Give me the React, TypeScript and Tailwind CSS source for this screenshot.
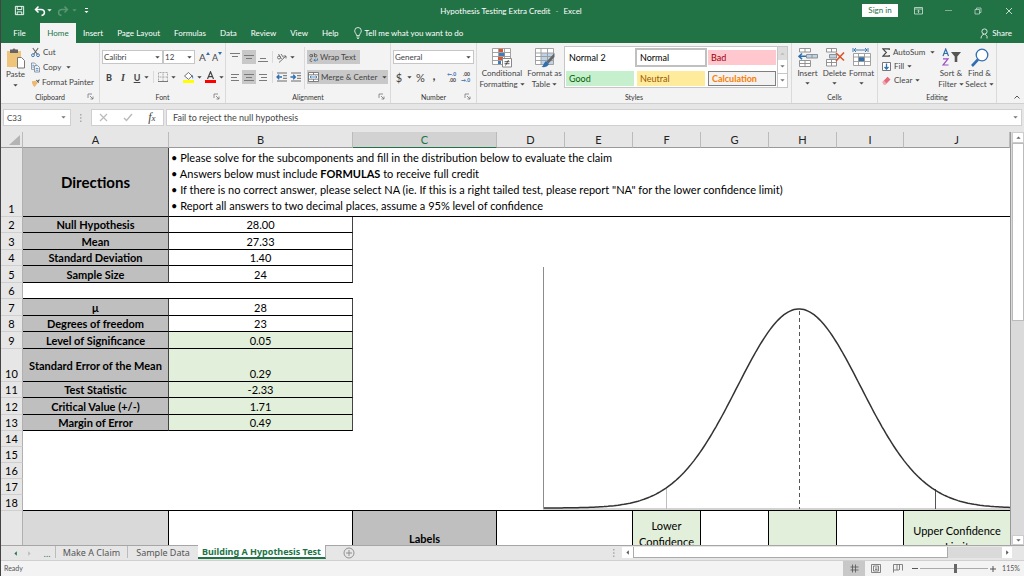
import type { ReactNode } from "react";
import clsx from "clsx";

const menuTabs = ["Insert", "Page Layout", "Formulas", "Data", "Review", "View", "Help"];

const rows = [
  { n: 2, label: "Null Hypothesis", value: "28.00", h: "h-[16px]" },
  { n: 3, label: "Mean", value: "27.33", h: "h-[17px]" },
  { n: 4, label: "Standard Deviation", value: "1.40", h: "h-[16px]" },
  { n: 5, label: "Sample Size", value: "24", h: "h-[17px]" },
  { n: 6, h: "h-[16px]" },
  { n: 7, label: "µ", value: "28", h: "h-[17px]" },
  { n: 8, label: "Degrees of freedom", value: "23", h: "h-[16px]" },
  { n: 9, label: "Level of Significance", value: "0.05", h: "h-[17px]", green: true },
  { n: 10, label: "Standard Error of the Mean", value: "0.29", h: "h-[33px]", green: true },
  { n: 11, label: "Test Statistic", value: "-2.33", h: "h-[16px]", green: true },
  { n: 12, label: "Critical Value (+/-)", value: "1.71", h: "h-[17px]", green: true },
  { n: 13, label: "Margin of Error", value: "0.49", h: "h-[16px]", green: true },
  { n: 14, h: "h-[16px]" },
  { n: 15, h: "h-[16px]" },
  { n: 16, h: "h-[16px]" },
  { n: 17, h: "h-[16px]" },
  { n: 18, h: "h-[16px]" },
];

function Caret({ className }: { className?: string }) {
  return (
    <svg viewBox="0 0 5 3" className={clsx("h-[3px] w-[5px] shrink-0", className)} aria-hidden>
      <path d="M0.3 0.2h4.4L2.5 2.6z" fill="currentColor" />
    </svg>
  );
}

function Group({ label, launcher, className, children }: { label: string; launcher?: boolean; className: string; children: ReactNode }) {
  return (
    <section aria-label={label} className={clsx("flex shrink-0 flex-col border-r border-[#dadada]", className)}>
      <div className="h-12">{children}</div>
      <div className="flex h-[11px] items-center px-1 text-[7px] leading-[10px] text-[#333]">
        <span className="w-2" />
        <span className="flex-1 text-center">{label}</span>
        <span className="w-2">
          {launcher && (
            <svg viewBox="0 0 7 7" className="h-[7px] w-[7px]" fill="none" stroke="#777" strokeWidth="0.8">
              <path d="M1 5V1h4M3 3l3 3M6 3.5V6H3.5" />
            </svg>
          )}
        </span>
      </div>
    </section>
  );
}

function Combo({ label, value, className }: { label: string; value: string; className: string }) {
  return (
    <label className={clsx("flex h-[14px] shrink-0 items-center border border-[#c6c6c6] bg-white pr-[2px] text-[#444]", className)}>
      <select aria-label={label} className="h-full min-w-0 flex-1 appearance-none pl-px outline-none">
        <option>{value}</option>
      </select>
      <Caret />
    </label>
  );
}

function Lines({ kind }: { kind: "top" | "middle" | "bottom" | "left" | "center" | "right" }) {
  const paths = {
    top: "M1 2.5h10M3 5.5h6",
    middle: "M1 4.5h10M3 7.5h6",
    bottom: "M3 7.5h6M1 10.5h10",
    left: "M2 3.5h8M2 6.5h6M2 9.5h8",
    center: "M1 3.5h10M3 6.5h6M1 9.5h10",
    right: "M2 3.5h8M4 6.5h6M2 9.5h8",
  };
  return (
    <button
      aria-label={`Align ${kind}`}
      className={clsx("flex h-[14px] w-[14px] items-center justify-center", (kind === "middle" || kind === "center") && "bg-[#c8c8c8]")}
    >
      <svg viewBox="0 0 12 12" className="h-3 w-3" stroke="#7a7a7a" strokeWidth="1">
        <path d={paths[kind]} />
      </svg>
    </button>
  );
}

function Indent({ out }: { out?: boolean }) {
  return (
    <button aria-label={out ? "Decrease indent" : "Increase indent"} className="flex w-[14px] justify-center">
      <svg viewBox="0 0 12 12" className="h-3 w-3" fill="none">
        <path d="M1 2h10M7 4.7h4M7 7.3h4M1 10h10" stroke="#6a6a6a" />
        <path d={out ? "M6 6H1M3.2 3.8L1 6l2.2 2.2" : "M0.5 6H5M3.2 3.8L5.4 6 3.2 8.2"} stroke="#2f6fae" strokeWidth="1.3" />
      </svg>
    </button>
  );
}

function TitleBar() {
  return (
    <header className="flex h-[23px] shrink-0 items-center bg-[#217346] pb-[2px] text-white">
      <div className="flex flex-1 items-center pl-[13px]">
        <button aria-label="Save" className="mr-[9px]">
          <svg viewBox="0 0 12 12" className="h-[11px] w-[11px]" fill="none" stroke="white">
            <path d="M1.5 1.5h9v9h-9z" />
            <path d="M3.5 1.5V5h5V1.5M3.5 10.5v-3h5v3" />
          </svg>
        </button>
        <button aria-label="Undo" className="flex items-center gap-px">
          <svg viewBox="0 0 12 12" className="h-3 w-3" fill="none" stroke="white" strokeWidth="1.5">
            <path d="M4.5 1.5L1.5 4.5l3 3M1.5 4.5H7c4.5 0 4.5 5.5 0.5 6" />
          </svg>
          <Caret />
        </button>
        <button aria-label="Redo" className="ml-[5px] flex items-center gap-[3px] opacity-25">
          <svg viewBox="0 0 12 12" className="h-3 w-3" fill="none" stroke="white" strokeWidth="1.5">
            <path d="M7.5 1.5l3 3-3 3M10.5 4.5H5C0.5 4.5 0.5 10 4.5 10.5" />
          </svg>
          <Caret />
        </button>
        <button aria-label="Customize toolbar" className="ml-[7px]">
          <svg viewBox="0 0 5 6" className="h-[6px] w-[5px]" fill="white">
            <path d="M1 0h3v1H1zM0.5 3h4L2.5 5z" />
          </svg>
        </button>
      </div>
      <h1 className="flex gap-[5px] pr-4 text-[8px] whitespace-pre">
        <span>Hypothesis Testing Extra Credit</span>
        <span className="opacity-60">-</span>
        <span>Excel</span>
      </h1>
      <div className="flex flex-1 items-center justify-end">
        <button className="mr-[5px] h-[13px] w-9 bg-white text-[8px] leading-[13px] text-[#217346]">Sign in</button>
        <button aria-label="Ribbon display options" className="flex w-[30px] justify-center">
          <svg viewBox="0 0 9 8" className="h-2 w-[9px]" fill="none" stroke="#cfe3d7" strokeWidth="0.8">
            <path d="M0.5 0.5h8v6.5h-8zM0.5 2h8M4.5 6V3.3M3.2 4.5l1.3-1.3 1.3 1.3" />
          </svg>
        </button>
        <button aria-label="Minimize" className="flex w-[30px] justify-center">
          <span className="h-px w-[7px] bg-[#7fae94]" />
        </button>
        <button aria-label="Restore" className="flex w-[30px] justify-center">
          <svg viewBox="0 0 8 8" className="h-2 w-2" fill="none" stroke="#bcd6c7" strokeWidth="0.8">
            <path d="M1 2.5h4.5v4.5H1zM2.5 2.5V1h4.5v4.5H5.5" />
          </svg>
        </button>
        <button aria-label="Close" className="flex w-[31px] justify-center">
          <svg viewBox="0 0 8 8" className="h-2 w-2" stroke="#d5e6dc" strokeWidth="0.9">
            <path d="M1 1l6 6M7 1L1 7" />
          </svg>
        </button>
      </div>
    </header>
  );
}

function MenuBar() {
  return (
    <nav className="flex h-5 shrink-0 items-stretch bg-[#217346] text-[8px] text-white">
      <button className="w-[39px] pr-[2px]">File</button>
      <button className="w-9 bg-[#f3f3f3] text-[#217346]">Home</button>
      {menuTabs.map((tab) => (
        <button key={tab} className="px-[7px]">
          {tab}
        </button>
      ))}
      <button className="ml-2 flex items-center gap-[3px]">
        <svg viewBox="0 0 8 12" className="h-3 w-2" fill="none" stroke="white" strokeWidth="0.8">
          <path d="M2.5 8.5C2.5 6.5 0.7 6 0.7 3.8a3.3 3.3 0 016.6 0C7.3 6 5.5 6.5 5.5 8.500zM2.5 10h3M3 11.4h2" />
        </svg>
        Tell me what you want to do
      </button>
      <button className="ml-auto flex items-center gap-[3px] pr-3">
        <svg viewBox="0 0 9 11" className="h-[11px] w-[9px]" fill="none" stroke="white" strokeWidth="0.8">
          <circle cx="4.5" cy="3.5" r="2.6" />
          <path d="M1 10.5C1 8 2.5 6.5 4 6.2M5 6.2l2 2v2.3" />
        </svg>
        Share
      </button>
    </nav>
  );
}

function Ribbon() {
  return (
    <div className="flex h-[60px] shrink-0 bg-[#f3f3f3] text-[8px] leading-[11px] text-[#444]">
      <Group label="Clipboard" launcher className="w-[99px]">
        <div className="flex pt-[4px]">
          <button className="flex w-[29px] flex-col items-center">
            <svg viewBox="0 0 20 22" className="h-[22px] w-5">
              <path d="M1 4h14v16H1z" fill="#efc57b" />
              <path d="M4 2.5h2.5a1.7 1.7 0 013 0H12V6H4z" fill="#666" />
              <path d="M11.5 10.5h4l3 3V21h-7z" fill="white" stroke="#777" />
            </svg>
            <span>Paste</span>
            <Caret className="mt-[4px]" />
          </button>
          <div className="flex flex-col gap-[4px] pl-px">
            <button className="flex items-center gap-[3px]">
              <svg viewBox="0 0 10 11" className="h-[11px] w-[9px]" fill="none">
                <path d="M2 0.5l5 7M8 0.5l-5 7" stroke="#666" strokeWidth="1.2" />
                <circle cx="2.2" cy="8.5" r="1.6" stroke="#2f6fae" />
                <circle cx="7.8" cy="8.5" r="1.6" stroke="#2f6fae" />
              </svg>
              Cut
            </button>
            <button className="flex items-center gap-[3px]">
              <svg viewBox="0 0 10 11" className="h-[11px] w-[9px]" fill="white" stroke="#6d7f92" strokeWidth="0.9">
                <path d="M0.5 0.5h3.5l1.5 1.5v5.5h-5z" />
                <path d="M4 3.5h3.5l2 2v5H4z" />
                <path d="M1.5 3h2M1.5 5h2M5.3 6.5h3M5.3 8.5h3" stroke="#2f6fae" />
              </svg>
              Copy
              <Caret className="ml-[2px]" />
            </button>
            <button className="flex items-center gap-[2px]">
              <svg viewBox="0 0 10 10" className="h-[10px] w-[9px]">
                <path d="M1 3l4-0.5 2.5 2.5L4 9.5C2.5 8.5 1 6 1 3z" fill="#efb871" />
                <path d="M5.5 2l1-0.5 1 1L9 0.8l0.8 0.9L8.3 3.2 9 4.2 8 5z" fill="#555" />
              </svg>
              Format Painter
            </button>
          </div>
        </div>
      </Group>

      <Group label="Font" launcher className="w-[126px]">
        <div className="flex flex-col gap-[6px] pt-[7px] pl-[2px]">
          <div className="flex items-center">
            <Combo label="Font" value="Calibri" className="w-[61px]" />
            <Combo label="Font size" value="12" className="w-8" />
            <button className="ml-[4px] flex w-[10px]" aria-label="Grow font">
              <span className="text-[10px]">A</span>
              <svg viewBox="0 0 4 3" className="h-[3px] w-1 shrink-0" fill="#2f6fae">
                <path d="M0 3l2-3 2 3z" />
              </svg>
            </button>
            <button className="ml-[3px] flex w-[10px]" aria-label="Shrink font">
              <span className="text-[9px]">A</span>
              <svg viewBox="0 0 4 3" className="h-[3px] w-1 shrink-0" fill="#2f6fae">
                <path d="M0 0h4L2 3z" />
              </svg>
            </button>
          </div>
          <div className="flex h-[14px] items-center *:shrink-0">
            <button className="w-[14px] text-[9px] font-black">B</button>
            <button className="w-[14px] font-['Liberation_Serif',serif] text-[10px] font-bold italic">I</button>
            <button className="w-[14px] text-[9px] font-bold underline">U</button>
            <Caret />
            <span className="mx-1 h-3 w-px bg-[#dadada]" />
            <button aria-label="Borders" className="flex items-center gap-[3px]">
              <svg viewBox="0 0 10 10" className="h-[10px] w-[10px]" fill="none">
                <path d="M0.5 0.5h9v9h-9zM5 0.5v9M0.5 5h9" stroke="#aaa" strokeDasharray="1 0.5" />
                <path d="M0 9.5h10" stroke="#777" />
              </svg>
              <Caret />
            </button>
            <button aria-label="Fill color" className="ml-[7px] flex items-center gap-[3px]">
              <svg viewBox="0 0 11 12" className="h-3 w-[11px]">
                <path d="M1.5 5L5.5 1.5 9 5 5.5 8.3z" fill="white" stroke="#666" strokeWidth="0.9" />
                <path d="M8.5 3.5C10 4 10.5 6 10 8 9.4 7 9 6 8.5 3.5z" fill="#2f6fae" />
                <path d="M0 9h11v3H0z" fill="#ffff00" />
              </svg>
              <Caret />
            </button>
            <button aria-label="Font color" className="ml-[3px] flex items-center gap-[3px]">
              <svg viewBox="0 0 11 12" className="h-3 w-[11px]">
                <path d="M2.5 8L5.5 0.8 8.5 8M3.6 5.6h3.8" fill="none" stroke="#444" strokeWidth="1.2" />
                <path d="M0 9h11v3H0z" fill="#ff0000" />
              </svg>
              <Caret />
            </button>
          </div>
        </div>
      </Group>

      <Group label="Alignment" launcher className="w-[165px]">
        <div className="flex *:shrink-0">
          <div className="flex w-[74px] flex-col gap-[6px] pt-[7px] pl-[2px] *:*:shrink-0">
            <div className="flex h-[14px] items-center">
              <Lines kind="top" />
              <Lines kind="middle" />
              <Lines kind="bottom" />
              <span className="mx-[2px] h-3 w-px bg-[#dadada]" />
              <button aria-label="Orientation" className="ml-px flex items-center gap-[3px]">
                <svg viewBox="0 0 11 11" className="h-[11px] w-[11px]" fill="none" stroke="#666" strokeWidth="0.9">
                  <circle cx="3" cy="5.5" r="1.5" />
                  <path d="M2.5 2l3 5M5 2l2.5 3.5M3 10.5L10 4M7.5 4H10v2.5" />
                </svg>
                <Caret />
              </button>
            </div>
            <div className="flex h-[14px] items-center">
              <Lines kind="left" />
              <Lines kind="center" />
              <Lines kind="right" />
              <span className="mx-[2px] h-3 w-px bg-[#dadada]" />
              <Indent out />
              <Indent />
            </div>
          </div>
          <div className="mt-[4px] ml-[4px] h-[42px] w-px bg-[#dadada]" />
          <div className="flex flex-col items-start gap-[6px] pt-[7px] pl-[2px] whitespace-nowrap">
            <button className="flex h-[14px] w-[53px] items-center gap-[2px] bg-[#c8c8c8] pl-[2px]">
              <svg viewBox="0 0 10 11" className="h-[11px] w-[9px]" fill="none" stroke="#555" strokeWidth="0.9">
                <circle cx="2.2" cy="3.5" r="1.4" />
                <path d="M3.8 2v3M6 0.5V5" />
                <circle cx="7.5" cy="3.5" r="1.4" />
                <path d="M3.5 7.3a1.5 1.5 0 100 2.4" />
                <path d="M9.5 6.5v2h-4M7 7L5.5 8.5 7 10" stroke="#2f6fae" />
              </svg>
              Wrap Text
            </button>
            <button className="flex h-[14px] w-[81px] items-center gap-[2px] bg-[#c8c8c8] pl-px">
              <svg viewBox="0 0 11 10" className="h-[10px] w-[11px]" fill="white" stroke="#666" strokeWidth="0.8">
                <path d="M0.5 0.5h10v9h-10zM0.5 2.8h10M0.5 7.2h10M5.5 0.5v2.3M5.5 7.2v2.3" />
                <path d="M2 5h7M3.3 3.8L2 5l1.3 1.2M7.7 3.8L9 5 7.7 6.2" stroke="#2f6fae" fill="none" />
              </svg>
              Merge &amp; Center
              <Caret className="ml-[3px]" />
            </button>
          </div>
        </div>
      </Group>

      <Group label="Number" launcher className="w-[86px]">
        <div className="flex flex-col gap-[6px] pt-[7px] pl-[2px]">
          <Combo label="Number format" value="General" className="w-[81px]" />
          <div className="flex h-[14px] items-center pl-[2px] text-[11px] *:shrink-0">
            <button className="w-2" aria-label="Currency">$</button>
            <Caret className="ml-[4px]" />
            <button className="ml-[3px] w-[11px]" aria-label="Percent">%</button>
            <button className="ml-[4px] w-2 pb-[3px] font-black" aria-label="Comma style">,</button>
            <button aria-label="Increase decimal" className="ml-[9px] w-[9px] text-right text-[5px] leading-[6px] font-bold">
              <span className="block text-[#2f6fae]">←.0</span>
              <span className="block">.00</span>
            </button>
            <button aria-label="Decrease decimal" className="ml-[5px] w-[9px] text-right text-[5px] leading-[6px] font-bold">
              <span className="block">.00</span>
              <span className="block text-[#2f6fae]">→.0</span>
            </button>
          </div>
        </div>
      </Group>

      <Group label="Styles" className="w-[315px]">
        <div className="flex pt-[3px]">
          <button className="flex w-[50px] flex-col items-center pt-[2px]">
            <svg viewBox="0 0 20 20" className="h-5 w-5">
              <path d="M0.5 0.5h18v16h-18zM6.5 0.5v16M12.5 0.5v16M0.5 4.5h18M0.5 8.5h18M0.5 12.5h18" fill="white" stroke="#999" strokeWidth="0.9" />
              <path d="M7 1h4v3H7zM6 9h5v3H6z" fill="#d9532c" />
              <path d="M7 5h5.5v3H7zM6 13h3v3H6z" fill="#3d7cbf" />
              <path d="M10.5 10.5h9v8.5h-9z" fill="white" stroke="#888" />
              <path d="M12.5 13.7h5M12.5 15.7h5M16.5 12l-3 5.5" stroke="#333" strokeWidth="0.8" />
            </svg>
            <span>Conditional</span>
            <span className="flex items-center gap-[2px]">
              Formatting <Caret />
            </span>
          </button>
          <button className="flex w-[37px] flex-col items-center pt-[2px] pr-[2px] whitespace-nowrap">
            <svg viewBox="0 0 20 20" className="h-5 w-5">
              <path d="M0.5 0.5h18v16h-18z" fill="white" />
              <path d="M6 5h12.5v11.5H6z" fill="#bdd3ea" />
              <path d="M0.5 0.5h18v16h-18zM6 0.5v16M12.5 0.5v16M0.5 5h18M0.5 8.5h18M0.5 12.5h18" fill="none" stroke="#999" strokeWidth="0.9" />
              <path d="M19.5 5v4l-6 6.5-2-2z" fill="#666" />
              <path d="M11 13l3 3c-1.5 3-4.5 3.5-7.5 3 2-1 2-4 4.5-6z" fill="#2f6fae" />
            </svg>
            <span>Format as</span>
            <span className="flex items-center gap-[2px]">
              Table <Caret />
            </span>
          </button>
          <div className="flex h-[42px] w-[224px] border border-[#c6c6c6] bg-white">
            <div className="grid flex-1 grid-cols-3 gap-x-[3px] gap-y-[4px] px-px pt-[3px] text-[9px] text-black *:h-[15px] *:pl-[3px] *:text-left">
              <button>Normal 2</button>
              <button className="outline-2 outline-[#c0c0c0]">Normal</button>
              <button className="bg-[#ffc7ce] text-[#9c0006]">Bad</button>
              <button className="bg-[#c6efce] text-[#006100]">Good</button>
              <button className="bg-[#ffeb9c] text-[#9c5700]">Neutral</button>
              <button className="border border-[#7f7f7f] bg-[#f2f2f2] leading-[13px] font-bold text-[#fa7d00]">Calculation</button>
            </div>
            <div className="grid w-[10px] grid-rows-3 border-l border-[#c6c6c6] text-[#777] *:flex *:items-center *:justify-center">
              <button aria-label="Scroll styles up" className="bg-[#dcdcdc] text-[#bbb]">
                <Caret className="rotate-180" />
              </button>
              <button aria-label="Scroll styles down" className="border-b border-[#c6c6c6]">
                <Caret />
              </button>
              <button aria-label="More styles">
                <Caret />
              </button>
            </div>
          </div>
        </div>
      </Group>

      <Group label="Cells" className="w-[86px]">
        <div className="flex pt-[5px] pl-[2px] *:flex *:w-[27px] *:flex-col *:items-center">
          <button>
            <svg viewBox="0 0 20 20" className="h-5 w-5" fill="white" stroke="#888" strokeWidth="0.9">
              <path d="M1.5 0.5h11v3.5h-11zM7 0.5v3.5M1.5 12.5h11v6h-11zM7 12.5v6M1.5 15.5h11" />
              <path d="M8.5 6.5h11v3.5h-11zM14 6.5v3.5" fill="#bdd3ea" />
              <path d="M8 8.3H1.5M4 5.5L1 8.3l3 2.8" fill="none" stroke="#2f6fae" strokeWidth="1.5" />
            </svg>
            Insert
            <Caret className="mt-[3px]" />
          </button>
          <button>
            <svg viewBox="0 0 20 20" className="h-5 w-5" fill="white" stroke="#888" strokeWidth="0.9">
              <path d="M1.5 0.5h10v3.5h-10zM6.5 0.5v3.5M1.5 11.5h10v6.5h-10zM6.5 11.5v6.5M1.5 14.5h10" />
              <path d="M4.5 6.5h7v3.5h-7z" fill="#bdd3ea" />
              <path d="M11 5l8 7.5M19 4.5l-8 8.5" stroke="#d9532c" strokeWidth="1.6" />
            </svg>
            Delete
            <Caret className="mt-[3px]" />
          </button>
          <button>
            <svg viewBox="0 0 20 20" className="h-5 w-5" fill="white" stroke="#999" strokeWidth="0.9">
              <path d="M1.5 5.5h17v12h-17zM6.5 5.5v12M12.5 5.5v12M1.5 9h17M1.5 13.5h17" />
              <path d="M6.5 9h6v4.5h-6z" fill="#2f6fae" />
              <path d="M2 2h13M4 0L2 2l2 2M13 0l2 2-2 2M1 0v4M16 0v4" fill="none" stroke="#2f6fae" />
            </svg>
            Format
            <Caret className="mt-[3px]" />
          </button>
        </div>
      </Group>

      <Group label="Editing" className="w-[119px]">
        <div className="flex pt-[4px]">
          <div className="flex w-[59px] flex-col items-start gap-[3px] pl-[4px]">
            <button className="flex items-center gap-[3px]">
              <svg viewBox="0 0 8 9" className="h-[9px] w-2" fill="none" stroke="#444" strokeWidth="1.2">
                <path d="M7.3 2V0.8H0.8L4.3 4.5 0.8 8.2h6.5V7" />
              </svg>
              AutoSum
              <Caret className="ml-[2px]" />
            </button>
            <button className="flex items-center gap-[3px]">
              <svg viewBox="0 0 9 9" className="h-[9px] w-[9px]" fill="none">
                <path d="M0.5 0.5h8v8h-8z" fill="white" stroke="#777" />
                <path d="M4.5 1.5V7M2.5 5l2 2 2-2" stroke="#2f6fae" strokeWidth="1.3" />
              </svg>
              Fill
              <Caret />
            </button>
            <button className="flex items-center gap-[3px]">
              <svg viewBox="0 0 9 9" className="h-[9px] w-[9px]">
                <path d="M0.5 6L5.5 0.8 8.5 3.5 3.5 8.5H1.8z" fill="#e5687c" />
                <path d="M0.5 6l1.3 2.5h1.7l1-1L2 4.5z" fill="#f4a8b4" />
              </svg>
              Clear
              <Caret />
            </button>
          </div>
          <button className="flex w-[28px] flex-col items-center pt-px whitespace-nowrap">
            <svg viewBox="0 0 19 20" className="h-5 w-[19px]" fill="none">
              <path d="M1 8L3.7 1 6.5 8M2 5.5h3.5" stroke="#2f6fae" strokeWidth="1.2" />
              <path d="M1 10.8h5L1 17h5.5" stroke="#9b4fc0" strokeWidth="1.2" />
              <path d="M9 4h10l-3.7 4.5V14h-2.6V8.5z" fill="#555" />
            </svg>
            <span>Sort &amp;</span>
            <span className="flex items-center gap-[2px]">
              Filter <Caret />
            </span>
          </button>
          <button className="flex w-[29px] flex-col items-center pt-px whitespace-nowrap">
            <svg viewBox="0 0 20 20" className="h-5 w-5" fill="none" stroke="#2f6fae">
              <circle cx="12" cy="7" r="5.8" fill="white" strokeWidth="1.3" />
              <path d="M8 11.5L2 18" strokeWidth="2.6" />
            </svg>
            <span>Find &amp;</span>
            <span className="flex items-center gap-[2px]">
              Select <Caret />
            </span>
          </button>
        </div>
      </Group>
      <button aria-label="Collapse ribbon" className="ml-auto flex w-7 items-end justify-center pb-[4px] pl-3">
        <svg viewBox="0 0 6 4" className="h-1 w-[6px]" fill="none" stroke="#555">
          <path d="M0.5 3.5L3 1l2.5 2.5" />
        </svg>
      </button>
    </div>
  );
}

function FormulaBar() {
  return (
    <div className="flex h-[29px] shrink-0 items-start border-t border-[#d0d0d0] bg-[#e6e6e6] px-[2px] pt-[5px] text-[9px] text-[#444] *:h-[17px]">
      <label className="flex w-[68px] items-center border border-[#cfcfcf] bg-white pr-1">
        <input aria-label="Name box" defaultValue="C33" className="w-0 flex-1 pl-[3px] text-[8px] outline-none" />
        <Caret className="text-[#777]" />
      </label>
      <span className="flex w-5 items-center justify-center">
        <svg viewBox="0 0 2 8" className="h-2 w-[2px]" fill="#aaa">
          <path d="M0 0h1.5v1.5H0zM0 3.2h1.5v1.5H0zM0 6.4h1.5v1.5H0z" />
        </svg>
      </span>
      <div className="flex w-[73px] items-center justify-around border border-[#cfcfcf] bg-white">
        <button aria-label="Cancel">
          <svg viewBox="0 0 9 9" className="h-[9px] w-[9px]" stroke="#bbb" strokeWidth="1.2">
            <path d="M1 1l7 7M8 1L1 8" />
          </svg>
        </button>
        <button aria-label="Enter">
          <svg viewBox="0 0 10 9" className="h-[9px] w-[10px]" fill="none" stroke="#bbb" strokeWidth="1.5">
            <path d="M1 5l2.5 2.5L9 1" />
          </svg>
        </button>
        <button aria-label="Insert function" className="font-['Liberation_Serif',serif] text-[12px] leading-[14px] italic">
          f<span className="text-[9px]">x</span>
        </button>
      </div>
      <label className="ml-[2px] flex min-w-0 flex-1 items-center border border-[#cfcfcf] bg-white pr-[3px]">
        <input aria-label="Formula bar" defaultValue="Fail to reject the null hypothesis" className="min-w-0 flex-1 pl-[6px] outline-none" />
        <Caret className="text-[#777]" />
      </label>
    </div>
  );
}

// Bell curve over the lower rows, with a marker at each confidence limit.
function BellCurve() {
  const points: string[] = [];
  for (let x = 1; x <= 467; x += 2) {
    const y = 241 - 199 * Math.exp(-((x - 256) ** 2) / (2 * 62 ** 2));
    points.push(`${x},${y.toFixed(1)}`);
  }
  return (
    <svg viewBox="0 0 467 243" className="absolute top-[135px] left-[542px] h-[243px] w-[467px]" fill="none" role="img" aria-label="Normal distribution">
      <path d="M0.5 0v242" stroke="#8c8c8c" />
      <path d="M0 242h467" stroke="#a6a6a6" />
      <path d="M123.5 222v20" stroke="#bfbfbf" />
      <path d="M392.5 222v20" stroke="#555" />
      <path d="M256.5 44v198" stroke="#555" strokeDasharray="4 3" />
      <polyline points={points.join(" ")} stroke="#333" strokeWidth="1.5" />
    </svg>
  );
}

function Sheet() {
  const rowHead = "border-r border-b border-r-[#b0b0b0] border-b-[#cfcfcf] bg-[#e6e6e6] align-bottom font-normal";
  return (
    <div className="relative min-w-0 flex-1 overflow-hidden border-r border-[#999] bg-white">
      <table className="w-full table-fixed border-separate border-spacing-0 text-center text-[11px] leading-[15px] text-black">
        <colgroup>
          <col className="w-[22px]" />
          <col className="w-[146px]" />
          <col className="w-[184px]" />
          <col className="w-[144px]" />
          <col className="w-[68px]" />
          <col className="w-[68px]" />
          <col className="w-[68px]" />
          <col className="w-[68px]" />
          <col className="w-[68px]" />
          <col className="w-[67px]" />
          <col />
        </colgroup>
        <thead>
          <tr className="bg-[#e6e6e6] text-[#222] *:h-4 *:border-r *:border-b *:border-[#bbb] *:border-b-[#999] *:font-normal">
            <th>
              <svg viewBox="0 0 12 12" className="ml-auto h-3 w-[14px]" fill="#b4b4b4">
                <path d="M11 1v10H0z" />
              </svg>
            </th>
            {"ABCDEFGHIJ".split("").map((c) => (
              <th key={c} scope="col" className={clsx(c === "C" && "border-b-[#217346]! bg-[#d2d2d2] text-[#217346]")}>
                {c}
              </th>
            ))}
          </tr>
        </thead>
        <tbody>
          <tr className="h-[69px]">
            <th scope="row" className={rowHead}>1</th>
            <td className="border-r border-b border-black border-r-[#444] bg-[#bfbfbf] text-[15px] font-bold">Directions</td>
            <td colSpan={9} className="border-b border-black pl-[2px] text-left leading-4">
              <ul>
                <li>• Please solve for the subcomponents and fill in the distribution below to evaluate the claim</li>
                <li>
                  • Answers below must include <b>FORMULAS</b> to receive full credit
                </li>
                <li>• If there is no correct answer, please select NA (ie. If this is a right tailed test, please report "NA" for the lower confidence limit)</li>
                <li>• Report all answers to two decimal places, assume a 95% level of confidence</li>
              </ul>
            </td>
          </tr>
          {rows.map((row) => (
            <tr key={row.n} className={row.h}>
              <th scope="row" className={rowHead}>{row.n}</th>
              {row.label ? (
                <>
                  <td className="border-r border-b border-black border-r-[#444] bg-[#bfbfbf] font-bold">{row.label}</td>
                  <td className={clsx("border-r border-b border-black border-r-[#444] align-bottom", row.green && "bg-[#e2efda]")}>{row.value}</td>
                  <td colSpan={8} />
                </>
              ) : (
                <>
                  <td colSpan={2} className={clsx((row.n === 6 || row.n === 18) && "border-b border-black")} />
                  <td colSpan={8} className={clsx(row.n === 18 && "border-b border-black")} />
                </>
              )}
            </tr>
          ))}
          <tr className="h-14 leading-4 *:border-r *:border-black">
            <th scope="row" className="border-r-[#b0b0b0]! bg-[#e6e6e6]" />
            <td className="bg-[#d9d9d9]" />
            <td />
            <td className="bg-[#bfbfbf] font-bold">Labels</td>
            <td colSpan={2} />
            <td className="bg-[#e2efda] pt-[6px]">Lower Confidence Limit</td>
            <td />
            <td className="bg-[#e2efda]" />
            <td />
            <td className="border-r-0! bg-[#e2efda]">
              Upper Confidence
              <br />
              Limit
            </td>
          </tr>
        </tbody>
      </table>
      <BellCurve />
    </div>
  );
}

function VerticalScroll() {
  return (
    <div className="flex w-[13px] shrink-0 flex-col bg-[#dadada] pl-px text-[#666] *:flex *:items-center *:justify-center">
      <button aria-label="Scroll up" className="h-[11px] border border-[#ccc] bg-white">
        <Caret className="rotate-180" />
      </button>
      <div className="h-[178px] border border-[#bbb] bg-white" />
      <button aria-label="Scroll down" className="mt-auto h-[10px] border border-[#ccc] bg-white">
        <Caret />
      </button>
    </div>
  );
}

function SheetTabs() {
  return (
    <div className="flex h-[15px] shrink-0 border-t border-[#a6a6a6] bg-[#e6e6e6] font-['Noto_Sans',sans-serif] text-[9px] leading-[11px] text-[#555]">
      <button aria-label="Previous sheet" className="w-[26px] pl-3 text-[#217346]">
        <Caret className="rotate-90" />
      </button>
      <button aria-label="Next sheet" className="w-3 text-[#bbb]">
        <Caret className="-rotate-90" />
      </button>
      <button className="w-4 text-[#217346]">…</button>
      <button className="mb-[2px] w-[72px] border-l border-[#bbb]">Make A Claim</button>
      <button className="mb-[2px] w-[71px] border-l border-[#bbb]">Sample Data</button>
      <button className="-mt-px h-[14px] w-[128px] border-r border-b-2 border-[#217346] border-r-[#aaa] bg-white font-bold whitespace-nowrap text-[#217346]">
        Building A Hypothesis Test
      </button>
      <button aria-label="New sheet" className="flex w-[45px] items-center justify-center">
        <svg viewBox="0 0 12 12" className="h-3 w-3" fill="none" stroke="#888" strokeWidth="0.9">
          <circle cx="6" cy="6" r="5" />
          <path d="M6 3v6M3 6h6" />
        </svg>
      </button>
      <div className="mt-px ml-auto flex h-[11px] w-[411px] items-center *:h-[11px]">
        <span className="flex w-[9px] items-center">
          <svg viewBox="0 0 2 8" className="h-2 w-[2px]" fill="#aaa">
            <path d="M0 0h1.5v1.5H0zM0 3.2h1.5v1.5H0zM0 6.4h1.5v1.5H0z" />
          </svg>
        </span>
        <div className="mr-3 flex flex-1 bg-[#dadada] text-[#555]">
          <button aria-label="Scroll left" className="flex w-[11px] items-center justify-center bg-white">
            <Caret className="rotate-90" />
          </button>
          <div className="w-[315px] border border-t-0 border-[#aaa] bg-white" />
          <button aria-label="Scroll right" className="ml-auto flex w-[10px] items-center justify-center bg-white">
            <Caret className="-rotate-90" />
          </button>
        </div>
      </div>
    </div>
  );
}

function StatusBar() {
  return (
    <footer className="flex h-4 shrink-0 items-center border-t border-[#d0d0d0] bg-[#f3f3f3] pl-[3px] text-[7px] text-[#555]">
      <span>Ready</span>
      <button aria-label="Normal view" className="ml-auto flex h-[15px] w-[22px] items-center justify-center bg-[#c8c8c8]">
        <svg viewBox="0 0 9 9" className="h-[9px] w-[9px]" stroke="#555" strokeWidth="0.8">
          <path d="M2.5 0.5v8M5.5 0.5v8M0.5 3h8M0.5 6h8" />
        </svg>
      </button>
      <button aria-label="Page layout view" className="flex w-[22px] justify-center">
        <svg viewBox="0 0 10 9" className="h-[9px] w-[10px]" fill="none" stroke="#777" strokeWidth="0.9">
          <path d="M0.5 0.5h9v8h-9zM2.5 2h5v5h-5zM4 4h2.5M4 5.5h2.5" />
        </svg>
      </button>
      <button aria-label="Page break preview" className="flex w-[22px] justify-center">
        <svg viewBox="0 0 10 9" className="h-[9px] w-[10px]" fill="none" stroke="#777" strokeWidth="0.9">
          <path d="M0.5 8.5v-8h9v6M0.5 6h5.5M4 0.5V6M6.5 0.5V6" />
        </svg>
      </button>
      <button aria-label="Zoom out" className="ml-[3px] h-px w-[6px] bg-[#555]" />
      <input
        type="range"
        aria-label="Zoom"
        min={10}
        max={190}
        defaultValue={105}
        className="mx-[2px] h-[9px] w-[68px] appearance-none bg-transparent [&::-webkit-slider-runnable-track]:h-px [&::-webkit-slider-runnable-track]:bg-[#aaa] [&::-webkit-slider-thumb]:-mt-1 [&::-webkit-slider-thumb]:h-[9px] [&::-webkit-slider-thumb]:w-[3px] [&::-webkit-slider-thumb]:appearance-none [&::-webkit-slider-thumb]:bg-[#666]"
      />
      <button aria-label="Zoom in">
        <svg viewBox="0 0 6 6" className="h-[6px] w-[6px]" stroke="#555">
          <path d="M3 0v6M0 3h6" />
        </svg>
      </button>
      <span className="w-7 pl-[2px] text-center">115%</span>
    </footer>
  );
}

export default function App() {
  return (
    <div className="flex h-screen min-h-[400px] flex-col overflow-hidden border-l border-[#444] bg-[#e6e6e6] font-['Lato',sans-serif]">
      <TitleBar />
      <MenuBar />
      <Ribbon />
      <FormulaBar />
      <main className="flex min-h-0 flex-1">
        <Sheet />
        <VerticalScroll />
      </main>
      <SheetTabs />
      <StatusBar />
    </div>
  );
}
